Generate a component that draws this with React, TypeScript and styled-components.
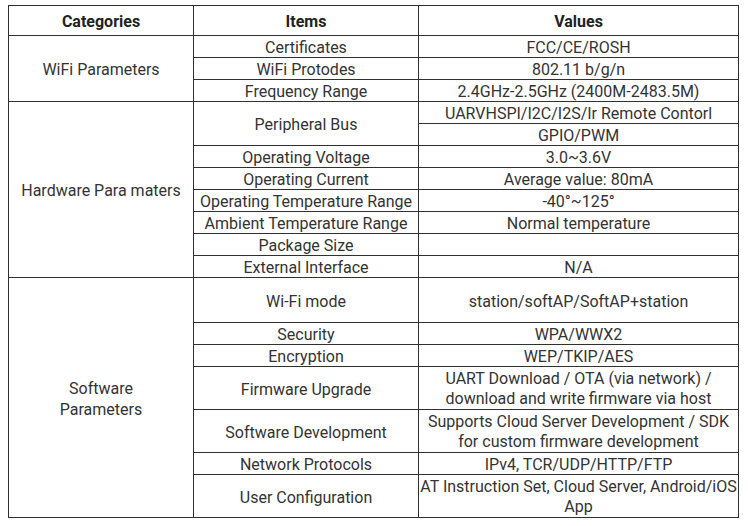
import React from 'react';
import styled, { createGlobalStyle } from 'styled-components';

const GlobalStyle = createGlobalStyle`
	html, body {
		margin: 0;
		padding: 0;
		background: #ffffff;
	}
	body {
		font-family: Roboto, "Liberation Sans", sans-serif;
		color: #333333;
	}
`;

const Page = styled.div`
	padding: 5px 0 0 8px;
`;

const Table = styled.table`
	border-collapse: collapse;
	table-layout: fixed;
	width: 730px;
	font-size: 16px;
	color: #333333;
`;

const Th = styled.th`
	border: 1px solid #303030;
	height: 27px;
	padding: 2px 0 0;
	line-height: 21px;
	font-weight: 700;
	color: #222222;
	text-align: center;
	vertical-align: middle;
`;

// height is content-box; padding-top sits text a touch low like the source
const Td = styled.td<{ $h?: number; $multi?: boolean }>`
	border: 1px solid #303030;
	padding: 2px 0 0;
	height: ${(p) => (p.$h ? `${p.$h}px` : '19px')};
	line-height: ${(p) => (p.$multi ? '20px' : '19px')};
	text-align: center;
	vertical-align: middle;
	white-space: nowrap;
`;

const CategoryCell = styled(Td)`
	line-height: 21px;
`;

const TravelTable: React.FC = () => {
	return (
		<Table>
			<colgroup>
				<col style={{ width: 185 }} />
				<col style={{ width: 225 }} />
				<col style={{ width: 320 }} />
			</colgroup>
			<thead>
				<tr>
					<Th>Categories</Th>
					<Th>Items</Th>
					<Th>Values</Th>
				</tr>
			</thead>
			<tbody>
				<tr>
					<CategoryCell rowSpan={3}>WiFi Parameters</CategoryCell>
					<Td>Certificates</Td>
					<Td>FCC/CE/ROSH</Td>
				</tr>
				<tr>
					<Td>WiFi Protodes</Td>
					<Td>802.11 b/g/n</Td>
				</tr>
				<tr>
					<Td>Frequency Range</Td>
					<Td>2.4GHz-2.5GHz (2400M-2483.5M)</Td>
				</tr>

				<tr>
					<CategoryCell rowSpan={8}>Hardware Para maters</CategoryCell>
					<Td rowSpan={2}>Peripheral Bus</Td>
					<Td>UARVHSPI/I2C/I2S/Ir Remote Contorl</Td>
				</tr>
				<tr>
					<Td>GPIO/PWM</Td>
				</tr>
				<tr>
					<Td>Operating Voltage</Td>
					<Td>3.0~3.6V</Td>
				</tr>
				<tr>
					<Td>Operating Current</Td>
					<Td>Average value: 80mA</Td>
				</tr>
				<tr>
					<Td>Operating Temperature Range</Td>
					<Td>-40°~125°</Td>
				</tr>
				<tr>
					<Td>Ambient Temperature Range</Td>
					<Td>Normal temperature</Td>
				</tr>
				<tr>
					<Td>Package Size</Td>
					<Td></Td>
				</tr>
				<tr>
					<Td>External Interface</Td>
					<Td>N/A</Td>
				</tr>

				<tr>
					<CategoryCell rowSpan={7}>Software<br />Parameters</CategoryCell>
					<Td $h={42}>Wi-Fi mode</Td>
					<Td $h={42}>station/softAP/SoftAP+station</Td>
				</tr>
				<tr>
					<Td>Security</Td>
					<Td>WPA/WWX2</Td>
				</tr>
				<tr>
					<Td>Encryption</Td>
					<Td>WEP/TKIP/AES</Td>
				</tr>
				<tr>
					<Td $h={40}>Firmware Upgrade</Td>
					<Td $h={40} $multi>UART Download / OTA (via network) /<br />download and write firmware via host</Td>
				</tr>
				<tr>
					<Td $h={40}>Software Development</Td>
					<Td $h={40} $multi>Supports Cloud Server Development / SDK<br />for custom firmware development</Td>
				</tr>
				<tr>
					<Td>Network Protocols</Td>
					<Td>IPv4, TCR/UDP/HTTP/FTP</Td>
				</tr>
				<tr>
					<Td $h={40}>User Configuration</Td>
					<Td $h={40} $multi>AT Instruction Set, Cloud Server, Android/iOS<br />App</Td>
				</tr>
			</tbody>
		</Table>
	);
};

const App: React.FC = () => {
	return (
		<Page>
			<GlobalStyle />
			<TravelTable />
		</Page>
	);
};

export default App;
